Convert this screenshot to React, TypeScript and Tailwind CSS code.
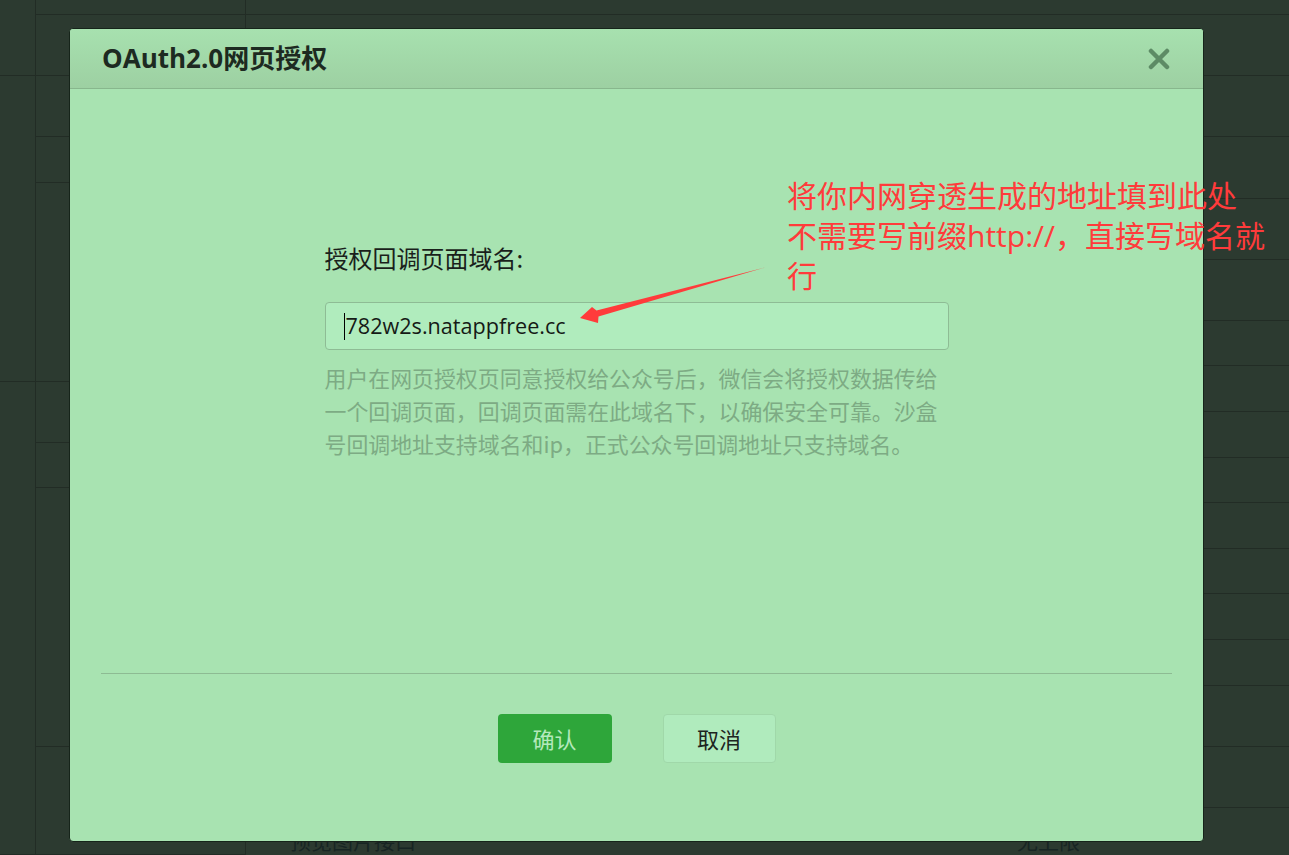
import React from "react";

const col1 = [76, 306, 473];
const col2 = [15, 61, 61, 46, 199, 61, 45, 259, 108];
const col3 = [15, 61, 61, 62, 61, 61, 45, 46, 46, 45, 46, 45, 46, 46, 61, 61];

function Column({ rows, className }: { rows: number[]; className: string }) {
  return (
    <div className={className}>
      {rows.map((h, i) => (
        <div key={i} className="border-b border-[#222c25]" style={{ height: h }} />
      ))}
    </div>
  );
}

export default function App() {
  return (
    <div
      className="relative w-[1289px] h-[855px] overflow-hidden bg-[#2c3a30]"
      style={{ fontFamily: '"Open Sans", "Noto Sans CJK SC", sans-serif' }}
    >
      {/* background table */}
      <div className="flex h-full">
        <Column rows={col1} className="w-[36px] border-r border-[#222c25] flex flex-col" />
        <Column rows={col2} className="w-[210px] border-r border-[#222c25] flex flex-col" />
        <div className="flex-1 flex flex-col">
          {col3.map((h, i) => (
            <div key={i} className="border-b border-[#222c25]" style={{ height: h }} />
          ))}
          <div className="flex pt-[19px] text-[21px] leading-[28px] text-[#172523]">
            <span className="ml-[44px] w-[727px]">预览图片接口</span>
            <span>无上限</span>
          </div>
        </div>
      </div>

      {/* modal */}
      <div className="absolute left-[69px] top-[28px] w-[1135px] h-[814px] rounded-[4px] border border-[#16241a] bg-[#a8e3b1] flex flex-col overflow-hidden">
        <div className="h-[60px] shrink-0 flex items-center justify-between border-b border-[#88b78d] bg-gradient-to-b from-[#a7e1af] to-[#9dd0a2] pl-[32px] pr-[33px]">
          <span className="text-[26px] font-bold text-[#1d2a21]">OAuth2.0网页授权</span>
          <svg width="22" height="22" viewBox="0 0 22 22">
            <path d="M3 3 L19 19 M19 3 L3 19" stroke="#5d8b65" strokeWidth="4.5" strokeLinecap="round" />
          </svg>
        </div>
        <div className="flex-1 flex flex-col">
          <div className="flex-1 flex justify-center pt-[153px]">
            <div className="w-[624px] flex flex-col">
              <div className="text-[24px] leading-[32px] text-[#1a1f1b]" style={{ fontFamily: '"Noto Sans CJK SC", sans-serif' }}>
                授权回调页面域名:
              </div>
              <div className="mt-[28px] h-[48px] rounded-[4px] border border-[#8ebc95] bg-[#b0ecbd] flex items-center pl-[18px]">
                <span className="inline-block w-px h-[27px] bg-black mr-[1px]" />
                <span className="text-[21.6px] text-[#151a16]">782w2s.natappfree.cc</span>
              </div>
              <div className="mt-[11px] text-[21.9px] leading-[33px] text-[#7dab84] whitespace-nowrap" style={{ fontFamily: '"Noto Sans CJK SC", sans-serif' }}>
                <div>用户在网页授权页同意授权给公众号后，微信会将授权数据传给</div>
                <div>一个回调页面，回调页面需在此域名下，以确保安全可靠。沙盒</div>
                <div>号回调地址支持域名和ip，正式公众号回调地址只支持域名。</div>
              </div>
            </div>
          </div>
          <div className="mx-[31px] border-t border-[#8dbb93]" />
          <div className="h-[167px] flex justify-center items-start pt-[40px] gap-[51px]">
            <div className="w-[114px] h-[49px] rounded-[4px] bg-[#2ea63a] flex items-center justify-center text-[22px] text-[#b4e9bc]" style={{ fontFamily: '"Noto Sans CJK SC", sans-serif' }}>
              确认
            </div>
            <div className="w-[113px] h-[49px] rounded-[4px] bg-[#b0ebbd] border border-[#a0d8a9] flex items-center justify-center text-[22px] text-[#1d251f]" style={{ fontFamily: '"Noto Sans CJK SC", sans-serif' }}>
              取消
            </div>
          </div>
        </div>
      </div>

      {/* annotation */}
      <div className="absolute left-[787px] top-[176px] text-[30px] leading-[40px] text-[#ff3b3b] whitespace-nowrap">
        <div>将你内网穿透生成的地址填到此处</div>
        <div>不需要写前缀http://，直接写域名就</div>
        <div>行</div>
      </div>
      <svg className="absolute left-0 top-0 pointer-events-none" width="1289" height="855" viewBox="0 0 1289 855">
        <polygon
          points="580,318 592,307 596.5,310.5 765,267.5 598.5,316.5 598,323"
          fill="#ff3b3b"
        />
      </svg>
    </div>
  );
}
